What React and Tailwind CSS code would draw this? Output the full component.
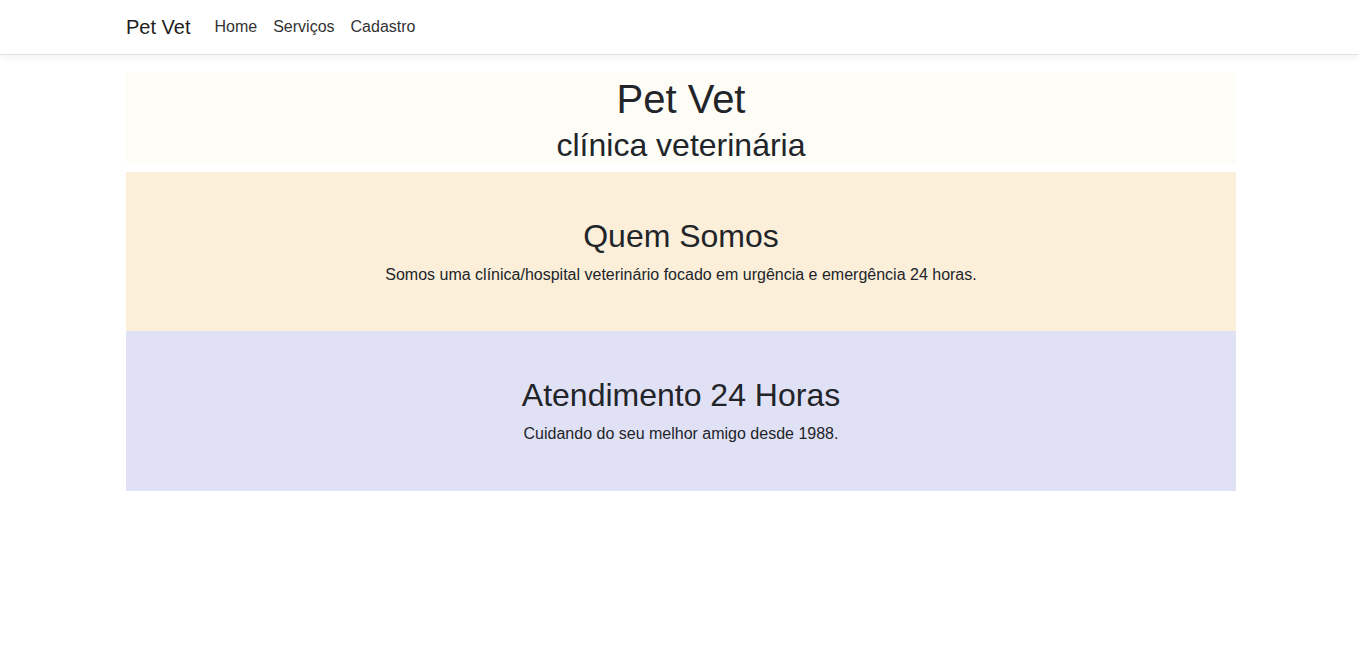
export default function App() {
  return (
    <div className="min-h-[655px] bg-white text-[#212529]" style={{ fontFamily: '"Liberation Sans", Arial, sans-serif' }}>
      <nav className="h-[55px] border-b border-[#e2e2e2] bg-white shadow-[0_2px_8px_rgba(0,0,0,0.06)]">
        <div className="ml-[126px] flex h-full w-[1110px] items-center">
          <span className="mr-4 text-[20px] leading-[30px] text-[#1e1e1e]">Pet Vet</span>
          <a className="px-2 text-[16px] leading-6 text-[#333]">Home</a>
          <a className="px-2 text-[16px] leading-6 text-[#333]">Serviços</a>
          <a className="px-2 text-[16px] leading-6 text-[#333]">Cadastro</a>
        </div>
      </nav>
      <main className="ml-[126px] mt-[17px] w-[1110px]">
        <header className="bg-[#fdfcf7] pt-[3px] text-center">
          <h1 className="mb-[3px] text-[40px] leading-[48px] font-normal">Pet Vet</h1>
          <h2 className="text-[32px] leading-[38px] font-normal">clínica veterinária</h2>
        </header>
        <section className="mt-[8px] bg-[#fcefda] pt-[45px] pb-[44px] text-center">
          <h2 className="mb-[8px] text-[32px] leading-[38px] font-normal">Quem Somos</h2>
          <p className="text-[16px] leading-6">Somos uma clínica/hospital veterinário focado em urgência e emergência 24 horas.</p>
        </section>
        <section className="bg-[#e1e1f6] pt-[45px] pb-[45px] text-center">
          <h2 className="mb-[8px] text-[32px] leading-[38px] font-normal">Atendimento 24 Horas</h2>
          <p className="text-[16px] leading-6">Cuidando do seu melhor amigo desde 1988.</p>
        </section>
      </main>
    </div>
  );
}
